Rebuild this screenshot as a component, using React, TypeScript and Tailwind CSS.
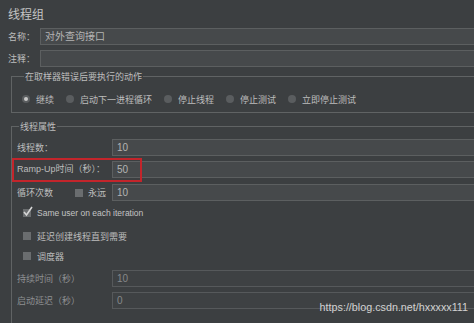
import React from "react";

function Field({ value, disabled }: { value?: string; disabled?: boolean }) {
  return (
    <div
      className={
        "h-[17px] flex-1 -mr-[20px] flex items-center pl-[4px] border " +
        (disabled
          ? "border-[#56595b] bg-[#3e4143] text-[#85888a]"
          : "border-[#5c5f60] bg-[#46494b] text-[#b4b4b4]")
      }
    >
      <span className="text-[10px] font-['Liberation_Sans','Noto_Sans_CJK_SC',sans-serif] leading-none">{value}</span>
    </div>
  );
}

function Radio({ label, checked }: { label: string; checked?: boolean }) {
  return (
    <div className="flex items-center gap-[6px]">
      <div className="w-[8px] h-[8px] rounded-full bg-[#5a5d5f] flex items-center justify-center">
        {checked && <div className="w-[4px] h-[4px] rounded-full bg-[#c8c8c8]" />}
      </div>
      <span>{label}</span>
    </div>
  );
}

function Check({ checked }: { checked?: boolean }) {
  return (
    <div className="w-[8px] h-[8px] bg-[#6a6d6f] relative">
      {checked && (
        <svg className="absolute -left-[1px] -top-[3px]" width="11" height="11" viewBox="0 0 11 11">
          <path d="M2 6 L4.5 9 L10 1" stroke="#d6d6d6" strokeWidth="1.6" fill="none" />
        </svg>
      )}
    </div>
  );
}

export default function App() {
  return (
    <div className="w-[474px] h-[323px] overflow-hidden bg-[#3c3f41] relative text-[#bdbdbd] text-[9px] font-['Noto_Sans_CJK_SC','Noto_Sans',sans-serif] leading-none">
      <div className="pl-[8px] h-[28px] flex items-center text-[12px] text-[#c4c4c4]">线程组</div>

      <div className="flex items-center pl-[8px] h-[17px]">
        <span className="w-[32px]">名称：</span>
        <Field value="对外查询接口" />
      </div>

      <div className="flex items-center pl-[8px] h-[17px] mt-[5px]">
        <span className="w-[32px]">注释：</span>
        <Field />
      </div>

      <fieldset className="ml-[11px] -mr-[20px] mt-[3px] border border-[#606364] pt-[10px] pb-[6px] pl-[10px]">
        <legend className="ml-[2px] px-[1px] h-[12px] flex items-center">在取样器错误后要执行的动作</legend>
        <div className="h-[14px] flex items-center gap-[12px]">
          <Radio label="继续" checked />
          <Radio label="启动下一进程循环" />
          <Radio label="停止线程" />
          <Radio label="停止测试" />
          <Radio label="立即停止测试" />
        </div>
      </fieldset>

      <fieldset className="ml-[11px] -mr-[20px] mt-[7px] border border-[#606364] pl-[5px] h-[220px]">
        <legend className="ml-[2px] px-[1px] h-[12px] flex items-center">线程属性</legend>
        <div className="flex flex-col">
          <div className="flex items-center h-[17px] mt-[7px]">
            <span className="w-[95px]">线程数：</span>
            <Field value="10" />
          </div>
          <div className="flex items-center h-[17px] mt-[5px]">
            <span className="w-[95px] font-['Liberation_Sans','Noto_Sans_CJK_SC',sans-serif] text-[9px]">Ramp-Up时间（秒）：</span>
            <Field value="50" />
          </div>
          <div className="flex items-center h-[17px] mt-[6px]">
            <div className="w-[95px] flex items-center">
              <span className="w-[58px]">循环次数</span>
              <Check />
              <span className="ml-[5px]">永远</span>
            </div>
            <Field value="10" />
          </div>
          <div className="flex items-center h-[16px] mt-[4px] pl-[6px] gap-[6px]">
            <Check checked />
            <span className="font-['Liberation_Sans',sans-serif] text-[8.5px] text-[#c4c4c4]">Same user on each iteration</span>
          </div>
          <div className="flex items-center h-[16px] mt-[7px] pl-[6px] gap-[6px]">
            <Check />
            <span>延迟创建线程直到需要</span>
          </div>
          <div className="flex items-center h-[16px] mt-[4px] pl-[6px] gap-[6px]">
            <Check />
            <span>调度器</span>
          </div>
          <div className="flex items-center h-[17px] mt-[6px] text-[#8e9092]">
            <span className="w-[95px]">持续时间（秒）</span>
            <Field value="10" disabled />
          </div>
          <div className="flex items-center h-[17px] mt-[5px] text-[#8e9092]">
            <span className="w-[95px]">启动延迟（秒）</span>
            <Field value="0" disabled />
          </div>
        </div>
      </fieldset>

      <div className="absolute left-[12px] top-[158px] w-[130px] h-[24px] border-2 border-[#c3252b]" />

      <div className="absolute right-[6px] top-[302px] text-[10.75px] font-['Liberation_Sans',sans-serif] text-[#d2d2d2]">
        https://blog.csdn.net/hxxxxx111
      </div>
    </div>
  );
}
